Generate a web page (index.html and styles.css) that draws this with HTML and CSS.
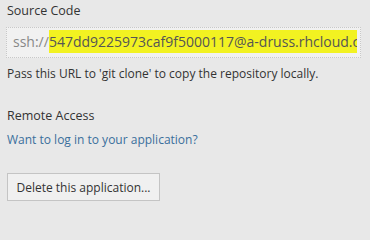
FILE: index.html
```html
<!DOCTYPE html>
<html>
<head>
<meta charset="utf-8">
<link rel="stylesheet" href="styles.css">
</head>
<body>
<div class="panel">
  <div class="label">Source Code</div>
  <div class="url-box"><div class="url-clip"><span class="proto">ssh://</span><span class="hl">547dd9225973caf9f5000117@a-druss.rhcloud.com/~/git/app.git/</span></div></div>
  <p class="help">Pass this URL to 'git clone' to copy the repository locally.</p>
  <div class="label label-remote">Remote Access</div>
  <a class="link" href="#">Want to log in to your application?</a>
  <div class="actions"><button class="btn">Delete this application...</button></div>
</div>
</body>
</html>
```
FILE: styles.css
```css
html, body {
  margin: 0;
  padding: 0;
  background: #e8e8e8;
}
body {
  font-family: "Open Sans", "DejaVu Sans", sans-serif;
  color: #333;
  width: 370px;
  height: 208px;
  overflow: hidden;
}
.panel {
  padding: 0 9px 0 6px;
  display: flex;
  flex-direction: column;
  align-items: flex-start;
}
.label {
  font-size: 12.5px;
  line-height: 20px;
  margin: 1px 0 0 1px;
  color: #333;
}
.url-box {
  align-self: stretch;
  box-sizing: border-box;
  margin-top: 6px;
  height: 31px;
  border: 1px dotted #c8c8c8;
  background: #f1f1f1;
  padding: 2px 3px 0 6px;
  color: #888;
}
.url-clip {
  white-space: nowrap;
  overflow: hidden;
  font-size: 14px;
  line-height: 23px;
  height: 23px;
}
.proto, .hl {
  display: inline-block;
  vertical-align: top;
  line-height: 23px;
}
.hl {
  background: #f2f221;
  color: #555;
}
.help {
  margin: 8px 0 0 1px;
  font-size: 12px;
  line-height: 16px;
}
.label-remote {
  margin-top: 24px;
  font-size: 12.5px;
}
.link {
  margin: 6px 0 0 1px;
  font-size: 12px;
  line-height: 16px;
  color: #3a6f9c;
  text-decoration: none;
}
.actions {
  margin-top: 25px;
  margin-left: 1px;
}
.btn {
  font-family: "Open Sans", "DejaVu Sans", sans-serif;
  font-size: 12px;
  color: #333;
  background: #f0f0f0;
  border: 1px solid #c4c4c4;
  border-radius: 0;
  height: 28px;
  width: 153px;
  padding: 0;
}
```
